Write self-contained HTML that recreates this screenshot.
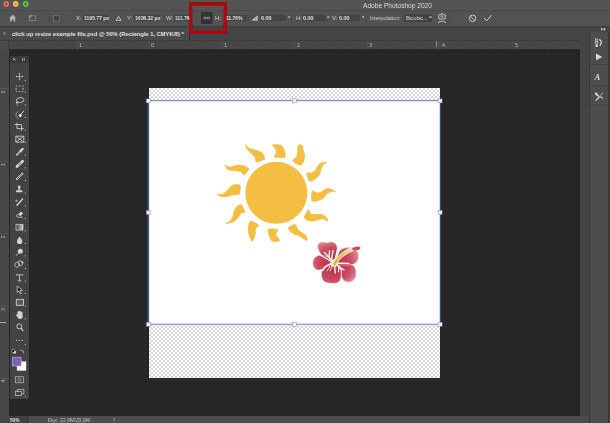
<!DOCTYPE html>
<html><head><meta charset="utf-8"><style>
*{margin:0;padding:0;box-sizing:border-box}
html,body{width:610px;height:423px;overflow:hidden;background:#272727;font-family:"Liberation Sans",sans-serif}
.a{position:absolute}
.t{position:absolute;white-space:nowrap;color:#d6d6d6;line-height:1;transform-origin:0 0;will-change:transform}
.field{position:absolute;top:15.2px;height:6px;background:#444444}
.ot{position:absolute;top:15.6px;font-size:6px;color:#e4e4e4;font-weight:bold;white-space:nowrap;line-height:1;transform-origin:0 0;will-change:transform}
svg{position:absolute;left:0;top:0;will-change:transform}
</style></head><body>
<div class="a" style="left:0;top:0;width:610px;height:9.5px;background:#545454"></div>
<div class="a" style="left:0;top:9.5px;width:610px;height:16.5px;background:#525252;border-top:0.5px solid #4a4a4a"></div>
<div class="a" style="left:0;top:26px;width:610px;height:14.3px;background:#444444;border-top:1.9px solid #3b3b3b"></div>
<div class="a" style="left:0;top:26px;width:189.5px;height:14.3px;background:#4a4a4a;border-top:1.9px solid #3b3b3b;border-right:1px solid #2e2e2e"></div>
<div class="a" style="left:9px;top:40.2px;width:571px;height:9.3px;background:#474747;border-top:0.8px solid #3f3f3f"></div>
<div class="a" style="left:0;top:40.2px;width:9px;height:383px;background:#474747"></div>
<div class="a" style="left:0;top:40.2px;width:9px;height:9.3px;background:#4b4b4b;border-top:0.8px solid #3f3f3f;border-right:0.6px solid #404040"></div>
<div class="a" style="left:9px;top:49.5px;width:1.2px;height:366px;background:#262626"></div>
<div class="a" style="left:576px;top:49.5px;width:3.5px;height:366px;background:#232323"></div>
<div class="a" style="left:579.5px;top:40.3px;width:10px;height:376px;background:#444444"></div>
<div class="a" style="left:589.5px;top:32.3px;width:19px;height:391px;background:#4d4d4d"></div>
<div class="a" style="left:588.6px;top:32.3px;width:0.9px;height:391px;background:#393939"></div>
<div class="a" style="left:608.4px;top:32.3px;width:0.8px;height:391px;background:#333333"></div>
<div class="a" style="left:609px;top:32.3px;width:1px;height:391px;background:#474747"></div>
<div class="a" style="left:9px;top:415.6px;width:579.6px;height:8px;background:#4c4c4c"></div>
<div class="a" style="left:9px;top:415.6px;width:19.5px;height:8px;background:#3f3f3f"></div>
<div class="a" style="left:10.2px;top:55.6px;width:18.6px;height:343.8px;background:#434343"></div>
<div class="a" style="left:10.2px;top:55.6px;width:18.6px;height:7.4px;background:#393939"></div>
<div class="a" style="left:28.8px;top:55.6px;width:1px;height:343.8px;background:#222222"></div>
<div class="a" style="left:149.3px;top:88px;width:290.4px;height:290px;background-color:#fff;background-image:linear-gradient(45deg,#d6d6d6 25%,transparent 25%,transparent 75%,#d6d6d6 75%),linear-gradient(45deg,#d6d6d6 25%,transparent 25%,transparent 75%,#d6d6d6 75%);background-size:4px 4px;background-position:0 0,2px 2px"></div>
<div class="a" style="left:149.3px;top:100.5px;width:290.4px;height:224px;background:#fff"></div>
<div class="a" style="left:404.3px;top:14.4px;width:28px;height:7.8px;background:#424242"></div>
<div class="field" style="left:83px;width:26px"></div>
<div class="field" style="left:134px;width:26px"></div>
<div class="field" style="left:174px;width:15px"></div>
<div class="field" style="left:225px;width:22px"></div>
<div class="field" style="left:260px;width:26px"></div>
<div class="field" style="left:302px;width:24px"></div>
<div class="field" style="left:338px;width:22px"></div>
<svg width="610" height="423" viewBox="0 0 610 423"><circle cx="6.3" cy="3.9" r="2.8" fill="#ee6a5f"/><circle cx="15.7" cy="3.9" r="2.8" fill="#f5c150"/><circle cx="25.7" cy="3.9" r="2.8" fill="#62c554"/><circle cx="6.3" cy="3.9" r="0.9" fill="#8c1a14"/><rect x="14.3" y="3.5" width="2.8" height="0.9" fill="#9a6a10"/><rect x="24.3" y="3.5" width="2.8" height="0.9" fill="#1e6e18"/><rect x="25.25" y="2.5" width="0.9" height="2.8" fill="#1e6e18"/><path d="M12.6,14.7 L16.2,18.1 L15.2,18.1 L15.2,21.5 L13.5,21.5 L13.5,19.5 L11.8,19.5 L11.8,21.5 L10.0,21.5 L10.0,18.1 L9,18.1 Z" fill="#b2b2b2"/><rect x="29.5" y="15.8" width="6.3" height="4.6" fill="none" stroke="#8e8e8e" stroke-width="0.7"/><path d="M29.2,15.5 L32,15.5 L29.2,18.5Z" fill="#a6a6a6"/><path d="M44,18 l1.2,1.2 l1.2,-1.2" fill="none" stroke="#666" stroke-width="0.5"/><rect x="48" y="12" width="0.6" height="11" fill="#4c4c4c"/><rect x="53.6" y="15.6" width="5.9" height="5.6" fill="#424242" stroke="#777777" stroke-width="0.8"/><rect x="63.3" y="15.8" width="7" height="5.4" fill="none" stroke="#5e5e5e" stroke-width="0.6" stroke-dasharray="1,1"/><path d="M118.6,16.3 L121,20.4 L116.2,20.4 Z" fill="none" stroke="#d0d0d0" stroke-width="0.85" stroke-linejoin="round"/><rect x="163.4" y="12" width="0.6" height="11" fill="#484848"/><path d="M251.6,20.4 L257.6,15.5 L257.6,20.4 Z" fill="#d0d0d0"/><path d="M254.6,19.2 L256.4,17.7 L256.4,19.2Z" fill="#505050"/><rect x="248" y="12" width="0.6" height="11" fill="#484848"/><rect x="291" y="12" width="0.6" height="11" fill="#484848"/><rect x="366" y="12" width="0.6" height="11" fill="#484848"/><path d="M438.5,15 L442,13.6 L445.5,15 L445,19 L439,19 Z" fill="none" stroke="#c8c8c8" stroke-width="0.9"/><path d="M440,16.2 h4 M442,14 v5" stroke="#c8c8c8" stroke-width="0.6"/><path d="M438,22.5 Q442,19.5 446,22.5" fill="none" stroke="#c8c8c8" stroke-width="0.9"/><rect x="449.4" y="12" width="0.6" height="11" fill="#484848"/><circle cx="472.6" cy="18.3" r="3.2" fill="none" stroke="#d0d0d0" stroke-width="0.95"/><path d="M470.4,16.1 L474.8,20.5" stroke="#d0d0d0" stroke-width="0.95"/><path d="M484.2,18.1 L486.6,20.9 L491.5,15.2" fill="none" stroke="#d8d8d8" stroke-width="0.95"/><rect x="190.75" y="3.95" width="34.5" height="28.1" fill="none" stroke="#aa0a0e" stroke-width="3.6"/><rect x="201" y="12" width="11.5" height="12" fill="#333333"/><path d="M203.8,17.2 h2.2 v1.6 h-2.2Z M207.5,17.2 h2.2 v1.6 h-2.2Z" fill="none" stroke="#bdbdbd" stroke-width="0.55"/><path d="M205.5,18 h2.5" stroke="#bdbdbd" stroke-width="0.55"/><rect x="3.2" y="32" width="2.8" height="2.8" rx="0.6" fill="#727272"/><rect x="22.43" y="46.5" width="0.6" height="3" fill="#525252"/><rect x="26.96" y="48" width="0.5" height="1.5" fill="#4f4f4f"/><rect x="31.49" y="48" width="0.5" height="1.5" fill="#4f4f4f"/><rect x="36.02" y="48" width="0.5" height="1.5" fill="#4f4f4f"/><rect x="40.55" y="46.5" width="0.6" height="3" fill="#525252"/><rect x="45.08" y="48" width="0.5" height="1.5" fill="#4f4f4f"/><rect x="49.61" y="48" width="0.5" height="1.5" fill="#4f4f4f"/><rect x="54.14" y="48" width="0.5" height="1.5" fill="#4f4f4f"/><rect x="58.68" y="46.5" width="0.6" height="3" fill="#525252"/><rect x="63.21" y="48" width="0.5" height="1.5" fill="#4f4f4f"/><rect x="67.74" y="48" width="0.5" height="1.5" fill="#4f4f4f"/><rect x="72.27" y="48" width="0.5" height="1.5" fill="#4f4f4f"/><rect x="76.80" y="41" width="0.7" height="8.5" fill="#585858"/><rect x="81.33" y="48" width="0.5" height="1.5" fill="#4f4f4f"/><rect x="85.86" y="48" width="0.5" height="1.5" fill="#4f4f4f"/><rect x="90.39" y="48" width="0.5" height="1.5" fill="#4f4f4f"/><rect x="94.93" y="46.5" width="0.6" height="3" fill="#525252"/><rect x="99.46" y="48" width="0.5" height="1.5" fill="#4f4f4f"/><rect x="103.99" y="48" width="0.5" height="1.5" fill="#4f4f4f"/><rect x="108.52" y="48" width="0.5" height="1.5" fill="#4f4f4f"/><rect x="113.05" y="46.5" width="0.6" height="3" fill="#525252"/><rect x="117.58" y="48" width="0.5" height="1.5" fill="#4f4f4f"/><rect x="122.11" y="48" width="0.5" height="1.5" fill="#4f4f4f"/><rect x="126.64" y="48" width="0.5" height="1.5" fill="#4f4f4f"/><rect x="131.18" y="46.5" width="0.6" height="3" fill="#525252"/><rect x="135.71" y="48" width="0.5" height="1.5" fill="#4f4f4f"/><rect x="140.24" y="48" width="0.5" height="1.5" fill="#4f4f4f"/><rect x="144.77" y="48" width="0.5" height="1.5" fill="#4f4f4f"/><rect x="149.30" y="41" width="0.7" height="8.5" fill="#585858"/><rect x="153.83" y="48" width="0.5" height="1.5" fill="#4f4f4f"/><rect x="158.36" y="48" width="0.5" height="1.5" fill="#4f4f4f"/><rect x="162.89" y="48" width="0.5" height="1.5" fill="#4f4f4f"/><rect x="167.43" y="46.5" width="0.6" height="3" fill="#525252"/><rect x="171.96" y="48" width="0.5" height="1.5" fill="#4f4f4f"/><rect x="176.49" y="48" width="0.5" height="1.5" fill="#4f4f4f"/><rect x="181.02" y="48" width="0.5" height="1.5" fill="#4f4f4f"/><rect x="185.55" y="46.5" width="0.6" height="3" fill="#525252"/><rect x="190.08" y="48" width="0.5" height="1.5" fill="#4f4f4f"/><rect x="194.61" y="48" width="0.5" height="1.5" fill="#4f4f4f"/><rect x="199.14" y="48" width="0.5" height="1.5" fill="#4f4f4f"/><rect x="203.68" y="46.5" width="0.6" height="3" fill="#525252"/><rect x="208.21" y="48" width="0.5" height="1.5" fill="#4f4f4f"/><rect x="212.74" y="48" width="0.5" height="1.5" fill="#4f4f4f"/><rect x="217.27" y="48" width="0.5" height="1.5" fill="#4f4f4f"/><rect x="221.80" y="41" width="0.7" height="8.5" fill="#585858"/><rect x="226.33" y="48" width="0.5" height="1.5" fill="#4f4f4f"/><rect x="230.86" y="48" width="0.5" height="1.5" fill="#4f4f4f"/><rect x="235.39" y="48" width="0.5" height="1.5" fill="#4f4f4f"/><rect x="239.93" y="46.5" width="0.6" height="3" fill="#525252"/><rect x="244.46" y="48" width="0.5" height="1.5" fill="#4f4f4f"/><rect x="248.99" y="48" width="0.5" height="1.5" fill="#4f4f4f"/><rect x="253.52" y="48" width="0.5" height="1.5" fill="#4f4f4f"/><rect x="258.05" y="46.5" width="0.6" height="3" fill="#525252"/><rect x="262.58" y="48" width="0.5" height="1.5" fill="#4f4f4f"/><rect x="267.11" y="48" width="0.5" height="1.5" fill="#4f4f4f"/><rect x="271.64" y="48" width="0.5" height="1.5" fill="#4f4f4f"/><rect x="276.18" y="46.5" width="0.6" height="3" fill="#525252"/><rect x="280.71" y="48" width="0.5" height="1.5" fill="#4f4f4f"/><rect x="285.24" y="48" width="0.5" height="1.5" fill="#4f4f4f"/><rect x="289.77" y="48" width="0.5" height="1.5" fill="#4f4f4f"/><rect x="294.30" y="41" width="0.7" height="8.5" fill="#585858"/><rect x="298.83" y="48" width="0.5" height="1.5" fill="#4f4f4f"/><rect x="303.36" y="48" width="0.5" height="1.5" fill="#4f4f4f"/><rect x="307.89" y="48" width="0.5" height="1.5" fill="#4f4f4f"/><rect x="312.43" y="46.5" width="0.6" height="3" fill="#525252"/><rect x="316.96" y="48" width="0.5" height="1.5" fill="#4f4f4f"/><rect x="321.49" y="48" width="0.5" height="1.5" fill="#4f4f4f"/><rect x="326.02" y="48" width="0.5" height="1.5" fill="#4f4f4f"/><rect x="330.55" y="46.5" width="0.6" height="3" fill="#525252"/><rect x="335.08" y="48" width="0.5" height="1.5" fill="#4f4f4f"/><rect x="339.61" y="48" width="0.5" height="1.5" fill="#4f4f4f"/><rect x="344.14" y="48" width="0.5" height="1.5" fill="#4f4f4f"/><rect x="348.68" y="46.5" width="0.6" height="3" fill="#525252"/><rect x="353.21" y="48" width="0.5" height="1.5" fill="#4f4f4f"/><rect x="357.74" y="48" width="0.5" height="1.5" fill="#4f4f4f"/><rect x="362.27" y="48" width="0.5" height="1.5" fill="#4f4f4f"/><rect x="366.80" y="41" width="0.7" height="8.5" fill="#585858"/><rect x="371.33" y="48" width="0.5" height="1.5" fill="#4f4f4f"/><rect x="375.86" y="48" width="0.5" height="1.5" fill="#4f4f4f"/><rect x="380.39" y="48" width="0.5" height="1.5" fill="#4f4f4f"/><rect x="384.93" y="46.5" width="0.6" height="3" fill="#525252"/><rect x="389.46" y="48" width="0.5" height="1.5" fill="#4f4f4f"/><rect x="393.99" y="48" width="0.5" height="1.5" fill="#4f4f4f"/><rect x="398.52" y="48" width="0.5" height="1.5" fill="#4f4f4f"/><rect x="403.05" y="46.5" width="0.6" height="3" fill="#525252"/><rect x="407.58" y="48" width="0.5" height="1.5" fill="#4f4f4f"/><rect x="412.11" y="48" width="0.5" height="1.5" fill="#4f4f4f"/><rect x="416.64" y="48" width="0.5" height="1.5" fill="#4f4f4f"/><rect x="421.18" y="46.5" width="0.6" height="3" fill="#525252"/><rect x="425.71" y="48" width="0.5" height="1.5" fill="#4f4f4f"/><rect x="430.24" y="48" width="0.5" height="1.5" fill="#4f4f4f"/><rect x="434.77" y="48" width="0.5" height="1.5" fill="#4f4f4f"/><rect x="439.30" y="41" width="0.7" height="8.5" fill="#585858"/><rect x="443.83" y="48" width="0.5" height="1.5" fill="#4f4f4f"/><rect x="448.36" y="48" width="0.5" height="1.5" fill="#4f4f4f"/><rect x="452.89" y="48" width="0.5" height="1.5" fill="#4f4f4f"/><rect x="457.43" y="46.5" width="0.6" height="3" fill="#525252"/><rect x="461.96" y="48" width="0.5" height="1.5" fill="#4f4f4f"/><rect x="466.49" y="48" width="0.5" height="1.5" fill="#4f4f4f"/><rect x="471.02" y="48" width="0.5" height="1.5" fill="#4f4f4f"/><rect x="475.55" y="46.5" width="0.6" height="3" fill="#525252"/><rect x="480.08" y="48" width="0.5" height="1.5" fill="#4f4f4f"/><rect x="484.61" y="48" width="0.5" height="1.5" fill="#4f4f4f"/><rect x="489.14" y="48" width="0.5" height="1.5" fill="#4f4f4f"/><rect x="493.68" y="46.5" width="0.6" height="3" fill="#525252"/><rect x="498.21" y="48" width="0.5" height="1.5" fill="#4f4f4f"/><rect x="502.74" y="48" width="0.5" height="1.5" fill="#4f4f4f"/><rect x="507.27" y="48" width="0.5" height="1.5" fill="#4f4f4f"/><rect x="511.80" y="41" width="0.7" height="8.5" fill="#585858"/><rect x="516.33" y="48" width="0.5" height="1.5" fill="#4f4f4f"/><rect x="520.86" y="48" width="0.5" height="1.5" fill="#4f4f4f"/><rect x="525.39" y="48" width="0.5" height="1.5" fill="#4f4f4f"/><rect x="529.92" y="46.5" width="0.6" height="3" fill="#525252"/><rect x="534.46" y="48" width="0.5" height="1.5" fill="#4f4f4f"/><rect x="538.99" y="48" width="0.5" height="1.5" fill="#4f4f4f"/><rect x="543.52" y="48" width="0.5" height="1.5" fill="#4f4f4f"/><rect x="548.05" y="46.5" width="0.6" height="3" fill="#525252"/><rect x="552.58" y="48" width="0.5" height="1.5" fill="#4f4f4f"/><rect x="557.11" y="48" width="0.5" height="1.5" fill="#4f4f4f"/><rect x="561.64" y="48" width="0.5" height="1.5" fill="#4f4f4f"/><rect x="566.17" y="46.5" width="0.6" height="3" fill="#525252"/><rect x="570.71" y="48" width="0.5" height="1.5" fill="#4f4f4f"/><rect x="575.24" y="48" width="0.5" height="1.5" fill="#4f4f4f"/><rect x="579.77" y="48" width="0.5" height="1.5" fill="#4f4f4f"/><rect x="6.5" y="52.05" width="2.5" height="0.6" fill="#545454"/><rect x="6.5" y="70.17" width="2.5" height="0.6" fill="#545454"/><rect x="0" y="88.30" width="9" height="0.7" fill="#5e5e5e"/><rect x="6.5" y="106.42" width="2.5" height="0.6" fill="#545454"/><rect x="6.5" y="124.55" width="2.5" height="0.6" fill="#545454"/><rect x="6.5" y="142.68" width="2.5" height="0.6" fill="#545454"/><rect x="0" y="160.80" width="9" height="0.7" fill="#5e5e5e"/><rect x="6.5" y="178.93" width="2.5" height="0.6" fill="#545454"/><rect x="6.5" y="197.05" width="2.5" height="0.6" fill="#545454"/><rect x="6.5" y="215.18" width="2.5" height="0.6" fill="#545454"/><rect x="0" y="233.30" width="9" height="0.7" fill="#5e5e5e"/><rect x="6.5" y="251.43" width="2.5" height="0.6" fill="#545454"/><rect x="6.5" y="269.55" width="2.5" height="0.6" fill="#545454"/><rect x="6.5" y="287.68" width="2.5" height="0.6" fill="#545454"/><rect x="0" y="305.80" width="9" height="0.7" fill="#5e5e5e"/><rect x="6.5" y="323.93" width="2.5" height="0.6" fill="#545454"/><rect x="6.5" y="342.05" width="2.5" height="0.6" fill="#545454"/><rect x="6.5" y="360.18" width="2.5" height="0.6" fill="#545454"/><rect x="0" y="378.30" width="9" height="0.7" fill="#5e5e5e"/><rect x="6.5" y="396.43" width="2.5" height="0.6" fill="#545454"/><rect x="6.5" y="414.55" width="2.5" height="0.6" fill="#545454"/><rect x="0" y="322" width="6" height="0.9" fill="#b4b4b4"/><rect x="436" y="40.8" width="0.8" height="6.6" fill="#9a9a9a"/><text x="0" y="0" transform="translate(4.7,93.2) rotate(-90)" font-family="Liberation Sans" font-size="5" fill="#bdbdbd">0</text><text x="0" y="0" transform="translate(4.7,165.7) rotate(-90)" font-family="Liberation Sans" font-size="5" fill="#bdbdbd">1</text><text x="0" y="0" transform="translate(4.7,238.2) rotate(-90)" font-family="Liberation Sans" font-size="5" fill="#bdbdbd">2</text><text x="0" y="0" transform="translate(4.7,310.7) rotate(-90)" font-family="Liberation Sans" font-size="5" fill="#bdbdbd">3</text><text x="0" y="0" transform="translate(4.7,382.5) rotate(-90)" font-family="Liberation Sans" font-size="5" fill="#bdbdbd">4</text><rect x="148.7" y="100.7" width="291.5" height="223.5" fill="none" stroke="#5a80c8" stroke-width="1.0"/><rect x="147.6" y="100.7" width="0.9" height="223.5" fill="#3a5588"/><rect x="440.5" y="100.7" width="0.8" height="223.5" fill="#26345a"/><rect x="146.40" y="98.90" width="4" height="4" fill="#eef3fc" stroke="#6f88bc" stroke-width="0.45"/><rect x="146.40" y="210.50" width="4" height="4" fill="#eef3fc" stroke="#6f88bc" stroke-width="0.45"/><rect x="146.40" y="322.30" width="4" height="4" fill="#eef3fc" stroke="#6f88bc" stroke-width="0.45"/><rect x="292.30" y="98.90" width="4" height="4" fill="#eef3fc" stroke="#6f88bc" stroke-width="0.45"/><rect x="292.30" y="322.30" width="4" height="4" fill="#eef3fc" stroke="#6f88bc" stroke-width="0.45"/><rect x="438.10" y="98.90" width="4" height="4" fill="#eef3fc" stroke="#6f88bc" stroke-width="0.45"/><rect x="438.10" y="210.50" width="4" height="4" fill="#eef3fc" stroke="#6f88bc" stroke-width="0.45"/><rect x="438.10" y="322.30" width="4" height="4" fill="#eef3fc" stroke="#6f88bc" stroke-width="0.45"/><circle cx="276.3" cy="192.8" r="31" fill="#f3be42"/><path d="M245.30,144.70 C245.38,144.44 247.62,147.36 248.50,147.90 C249.38,148.44 251.65,148.93 252.80,149.30 C253.96,149.67 257.25,150.60 258.40,151.10 C259.55,151.60 261.95,152.72 262.70,153.60 C263.45,154.47 264.59,157.94 264.80,158.60 C265.01,159.26 265.44,158.89 264.50,159.30 C263.56,159.71 257.82,162.36 256.70,162.10 C255.58,161.84 255.53,158.14 254.90,157.10 C254.27,156.06 252.13,154.02 251.30,153.20 C250.47,152.38 248.50,151.09 247.80,150.10 C247.10,149.11 245.22,144.96 245.30,144.70Z" fill="#f3be42" stroke="#f3be42" stroke-width="0.8" stroke-linejoin="round"/><path d="M272.50,145.10 C273.08,144.69 278.97,144.61 280.30,145.10 C281.63,145.59 283.36,148.36 283.90,149.30 C284.44,150.25 284.82,152.24 284.90,153.20 C284.98,154.16 285.80,157.04 284.60,157.50 C283.40,157.96 275.56,157.64 274.60,157.10 C273.64,156.56 276.32,153.89 276.40,152.90 C276.48,151.91 275.75,149.51 275.30,148.60 C274.85,147.69 271.92,145.51 272.50,145.10Z" fill="#f3be42" stroke="#f3be42" stroke-width="0.8" stroke-linejoin="round"/><path d="M298.40,145.30 C298.90,144.51 301.46,144.76 302.00,145.30 C302.54,145.84 302.67,148.70 303.00,149.90 C303.33,151.10 304.72,154.27 304.80,155.60 C304.88,156.93 304.24,160.18 303.70,161.30 C303.16,162.42 301.48,165.25 300.20,165.20 C298.92,165.15 293.12,161.86 292.70,160.90 C292.28,159.94 296.02,158.03 296.60,157.00 C297.18,155.97 297.49,153.47 297.70,152.10 C297.91,150.73 297.90,146.09 298.40,145.30Z" fill="#f3be42" stroke="#f3be42" stroke-width="0.8" stroke-linejoin="round"/><path d="M326.50,162.70 C326.42,162.41 322.86,162.41 321.90,162.70 C320.94,162.99 319.05,164.32 318.30,165.20 C317.55,166.07 316.33,169.29 315.50,170.20 C314.67,171.11 312.24,172.63 311.20,173.00 C310.16,173.37 306.76,172.44 306.60,173.40 C306.44,174.36 308.76,180.58 309.80,181.20 C310.84,181.82 314.35,179.49 315.50,178.70 C316.65,177.91 319.05,175.56 319.70,174.40 C320.35,173.25 320.76,169.87 321.10,168.80 C321.44,167.73 321.97,165.91 322.60,165.20 C323.23,164.49 326.58,162.99 326.50,162.70Z" fill="#f3be42" stroke="#f3be42" stroke-width="0.8" stroke-linejoin="round"/><path d="M312.30,191.10 C312.79,190.16 315.51,192.77 316.50,192.90 C317.49,193.03 319.81,192.62 320.80,192.20 C321.79,191.78 324.09,189.72 325.00,189.30 C325.91,188.88 327.77,188.55 328.60,188.60 C329.43,188.65 331.32,189.36 332.10,189.70 C332.88,190.04 335.46,191.25 335.30,191.50 C335.14,191.75 331.66,191.56 330.70,191.80 C329.74,192.05 327.93,192.89 327.10,193.60 C326.27,194.31 324.43,197.15 323.60,197.90 C322.77,198.65 321.32,199.64 320.00,200.00 C318.68,200.36 313.20,202.04 312.30,201.00 C311.40,199.96 311.81,192.04 312.30,191.10Z" fill="#f3be42" stroke="#f3be42" stroke-width="0.8" stroke-linejoin="round"/><path d="M308.50,209.80 C309.24,209.43 309.94,213.16 310.60,213.70 C311.27,214.24 313.29,214.35 314.20,214.40 C315.11,214.45 317.41,214.05 318.40,214.10 C319.39,214.15 321.79,214.44 322.70,214.80 C323.61,215.16 325.62,216.47 326.20,217.20 C326.78,217.93 327.94,220.89 327.70,221.10 C327.45,221.31 324.93,219.25 324.10,219.00 C323.27,218.75 321.51,218.84 320.60,219.00 C319.69,219.16 317.29,220.16 316.30,220.40 C315.31,220.65 313.17,221.13 312.10,221.10 C311.03,221.06 308.01,220.59 307.10,220.10 C306.19,219.61 304.14,218.10 304.30,216.90 C304.46,215.70 307.76,210.17 308.50,209.80Z" fill="#f3be42" stroke="#f3be42" stroke-width="0.8" stroke-linejoin="round"/><path d="M288.40,227.60 C288.94,226.77 294.03,224.20 295.10,224.40 C296.17,224.60 296.90,228.39 297.60,229.30 C298.30,230.21 300.19,231.53 301.10,232.20 C302.01,232.86 304.69,234.25 305.40,235.00 C306.11,235.75 307.04,237.94 307.20,238.60 C307.36,239.26 307.25,240.70 306.80,240.70 C306.35,240.70 304.21,239.18 303.30,238.60 C302.39,238.02 300.07,236.24 299.00,235.70 C297.93,235.16 295.09,234.49 294.10,234.00 C293.11,233.51 291.17,232.25 290.50,231.50 C289.83,230.75 287.86,228.43 288.40,227.60Z" fill="#f3be42" stroke="#f3be42" stroke-width="0.8" stroke-linejoin="round"/><path d="M268.30,229.30 C269.30,228.60 277.04,229.12 277.90,229.70 C278.76,230.28 275.50,233.02 275.70,234.30 C275.90,235.58 280.01,239.92 279.60,240.70 C279.19,241.48 273.40,241.58 272.20,241.00 C271.00,240.42 269.75,237.06 269.30,235.70 C268.85,234.33 267.30,230.00 268.30,229.30Z" fill="#f3be42" stroke="#f3be42" stroke-width="0.8" stroke-linejoin="round"/><path d="M250.80,221.20 C251.97,221.15 258.03,224.27 258.60,225.10 C259.17,225.93 256.12,227.10 255.70,228.30 C255.28,229.50 255.41,233.91 255.00,235.40 C254.59,236.89 252.95,241.34 252.20,241.10 C251.45,240.85 249.02,235.12 248.60,233.30 C248.18,231.48 248.34,226.91 248.60,225.50 C248.86,224.09 249.63,221.25 250.80,221.20Z" fill="#f3be42" stroke="#f3be42" stroke-width="0.8" stroke-linejoin="round"/><path d="M241.30,204.70 C242.13,205.45 244.80,211.24 244.80,212.20 C244.80,213.16 242.05,212.33 241.30,212.90 C240.55,213.47 239.23,216.11 238.40,217.10 C237.57,218.09 235.65,220.65 234.20,221.40 C232.75,222.15 226.42,223.58 226.00,223.50 C225.58,223.42 229.77,221.61 230.60,220.70 C231.43,219.79 232.60,217.03 233.10,215.70 C233.60,214.37 234.36,210.46 234.90,209.30 C235.44,208.15 236.95,206.34 237.70,205.80 C238.45,205.26 240.47,203.95 241.30,204.70Z" fill="#f3be42" stroke="#f3be42" stroke-width="0.8" stroke-linejoin="round"/><path d="M240.20,185.70 C239.75,184.58 236.37,184.52 235.30,184.60 C234.23,184.68 231.99,185.65 231.00,186.40 C230.01,187.15 227.79,190.09 226.80,191.00 C225.81,191.91 223.59,193.78 222.50,194.20 C221.41,194.62 217.58,194.31 217.50,194.60 C217.42,194.89 220.80,196.45 221.80,196.70 C222.80,196.94 225.03,196.86 226.10,196.70 C227.17,196.54 229.93,195.55 231.00,195.30 C232.07,195.06 234.34,194.73 235.30,194.60 C236.26,194.47 238.63,195.24 239.20,194.20 C239.77,193.16 240.65,186.82 240.20,185.70Z" fill="#f3be42" stroke="#f3be42" stroke-width="0.8" stroke-linejoin="round"/><path d="M225.00,165.20 C225.16,164.91 228.13,166.92 229.20,167.00 C230.27,167.08 233.13,166.15 234.20,165.90 C235.27,165.66 237.33,164.94 238.40,164.90 C239.47,164.87 242.23,165.19 243.40,165.60 C244.57,166.01 247.78,167.94 248.40,168.40 C249.02,168.86 249.20,168.72 248.70,169.50 C248.20,170.28 244.88,174.77 244.10,175.10 C243.32,175.43 242.75,172.79 242.00,172.30 C241.25,171.81 238.85,171.11 237.70,170.90 C236.54,170.69 233.25,170.66 232.10,170.50 C230.94,170.34 228.63,170.12 227.80,169.50 C226.97,168.88 224.84,165.49 225.00,165.20Z" fill="#f3be42" stroke="#f3be42" stroke-width="0.8" stroke-linejoin="round"/><defs><radialGradient id="pg" cx="334" cy="264" r="24" gradientUnits="userSpaceOnUse"><stop offset="0" stop-color="#d46676"/><stop offset="0.3" stop-color="#bc364e"/><stop offset="0.7" stop-color="#c84c60"/><stop offset="1" stop-color="#de7c8c"/></radialGradient><linearGradient id="stg" x1="335" y1="265" x2="354" y2="249" gradientUnits="userSpaceOnUse"><stop offset="0" stop-color="#e0b030"/><stop offset="0.6" stop-color="#ecc868"/><stop offset="1" stop-color="#f6e2b8"/></linearGradient></defs><path d="M334.00,264.00 C331.92,264.58 326.58,259.83 324.00,257.50 C321.42,255.17 319.50,252.17 318.50,250.00 C317.50,247.83 317.42,245.83 318.00,244.50 C318.58,243.17 320.42,242.28 322.00,242.00 C323.58,241.72 326.00,242.83 327.50,242.80 C329.00,242.77 329.67,241.68 331.00,241.80 C332.33,241.92 334.45,242.47 335.50,243.50 C336.55,244.53 337.13,246.25 337.30,248.00 C337.47,249.75 337.05,251.33 336.50,254.00 C335.95,256.67 336.08,263.42 334.00,264.00Z" fill="url(#pg)" stroke="#fbeaea" stroke-width="0.55"/><path d="M334.00,264.00 C333.17,265.75 326.67,267.50 324.00,268.50 C321.33,269.50 319.73,270.25 318.00,270.00 C316.27,269.75 314.43,268.50 313.60,267.00 C312.77,265.50 312.60,262.75 313.00,261.00 C313.40,259.25 314.50,257.45 316.00,256.50 C317.50,255.55 319.83,255.05 322.00,255.30 C324.17,255.55 327.00,256.55 329.00,258.00 C331.00,259.45 334.83,262.25 334.00,264.00Z" fill="url(#pg)" stroke="#fbeaea" stroke-width="0.55"/><path d="M334.00,264.00 C336.05,264.67 339.13,266.83 340.30,269.00 C341.47,271.17 341.38,274.75 341.00,277.00 C340.62,279.25 339.83,281.47 338.00,282.50 C336.17,283.53 332.42,283.45 330.00,283.20 C327.58,282.95 324.95,282.53 323.50,281.00 C322.05,279.47 321.30,276.25 321.30,274.00 C321.30,271.75 322.38,269.00 323.50,267.50 C324.62,266.00 326.25,265.58 328.00,265.00 C329.75,264.42 331.95,263.33 334.00,264.00Z" fill="url(#pg)" stroke="#fbeaea" stroke-width="0.55"/><path d="M334.00,264.00 C333.17,264.67 339.75,266.00 341.00,268.00 C342.25,270.00 340.92,273.83 341.50,276.00 C342.08,278.17 342.92,280.03 344.50,281.00 C346.08,281.97 349.15,282.47 351.00,281.80 C352.85,281.13 354.80,278.97 355.60,277.00 C356.40,275.03 356.23,271.92 355.80,270.00 C355.37,268.08 354.63,266.50 353.00,265.50 C351.37,264.50 349.17,264.25 346.00,264.00 C342.83,263.75 334.83,263.33 334.00,264.00Z" fill="url(#pg)" stroke="#fbeaea" stroke-width="0.55"/><path d="M334.00,264.00 C332.25,262.50 336.42,258.33 337.50,256.00 C338.58,253.67 338.92,251.40 340.50,250.00 C342.08,248.60 344.83,247.85 347.00,247.60 C349.17,247.35 351.67,247.60 353.50,248.50 C355.33,249.40 357.22,251.25 358.00,253.00 C358.78,254.75 358.70,257.25 358.20,259.00 C357.70,260.75 356.70,262.50 355.00,263.50 C353.30,264.50 351.50,264.92 348.00,265.00 C344.50,265.08 335.75,265.50 334.00,264.00Z" fill="url(#pg)" stroke="#fbeaea" stroke-width="0.55"/><g stroke="#fff6f0" stroke-linecap="round" fill="none"><path d="M334.2,263 L324.5,252.5 M329,257.5 L329.5,251 M331.5,260 L333,250.5" stroke-width="1.35"/><path d="M334.2,263 L321,255.5 M334.2,263 Q325,265 322.8,270.5 M334.2,263 Q335,268 335.2,273" stroke-width="1.4"/><path d="M334.2,263 L344,270 M339,266.5 L338.5,271.5 M334.2,263 L349,263.3 M334.2,263 L337.7,249" stroke-width="1.35"/><path d="M330,266 L327,271 M332,266 L330,271" stroke-width="0.8"/></g><circle cx="334.2" cy="263" r="3.8" fill="#fff3e6"/><path d="M334.5,264 Q341,253 353,249" fill="none" stroke="#fbf0dc" stroke-width="4" stroke-linecap="round"/><path d="M334.5,264 Q341,253 353,249" fill="none" stroke="url(#stg)" stroke-width="2.7" stroke-linecap="round"/><ellipse cx="356.3" cy="248.5" rx="4.2" ry="1.9" transform="rotate(-10 356.3 248.5)" fill="#d24a5a"/><path d="M13.1,58.2 L15.4,60.5 M15.4,58.2 L13.1,60.5" stroke="#cccccc" stroke-width="0.75"/><path d="M22.6,57.9 v3 M24.3,57.9 v3" stroke="#b4b4b4" stroke-width="0.75"/><path d="M19.5,73.4 V79.8 M16.2,76.6 H22.8" stroke="#d4d4d4" stroke-width="0.6"/><path d="M19.5,72.9 l-1,1.1 h2Z M19.5,80.3 l-1,-1.1 h2Z M15.8,76.6 l1.1,-1 v2Z M23.2,76.6 l-1.1,-1 v2Z" fill="#d4d4d4"/><path d="M15.8,86 h1.3 M18.9,86 h1.4 M22.1,86 h1.3 M15.8,91.6 h1.3 M18.9,91.6 h1.4 M22.1,91.6 h1.3 M16.1,87.9 v1.8 M23.1,87.9 v1.8" stroke="#d4d4d4" stroke-width="0.8"/><ellipse cx="20.2" cy="100.1" rx="3.7" ry="2.5" transform="rotate(-6 20.2 100.1)" fill="none" stroke="#d4d4d4" stroke-width="0.8"/><circle cx="16.9" cy="102.4" r="0.9" fill="#d4d4d4"/><path d="M16.9,102.8 Q16.8,104.6 17.6,105.8" fill="none" stroke="#d4d4d4" stroke-width="0.6"/><path d="M20.8,114.6 L23.5,111.2" stroke="#d4d4d4" stroke-width="1" stroke-linecap="round"/><circle cx="20.2" cy="115.4" r="1.5" fill="#e8e8e8"/><path d="M18.6,111.4 Q15.4,112.6 15.9,115.8 Q16.4,118.2 18.8,119" fill="none" stroke="#a8a8a8" stroke-width="0.7"/><path d="M17,122.5 V128.6 H23.8 M14.5,124.6 H21.6 V130.8" fill="none" stroke="#d4d4d4" stroke-width="0.85"/><path d="M15.8,136.2 H23.8 V142.2 H15.8Z M15.8,136.2 L23.8,142.2 M23.8,136.2 L15.8,142.2" fill="none" stroke="#d4d4d4" stroke-width="0.8"/><path d="M16.8,154.8 L20.8,150.8" stroke="#d4d4d4" stroke-width="1.7" stroke-linecap="round"/><path d="M17.2,154.4 L20.4,151.2" stroke="#434343" stroke-width="0.6"/><path d="M20.6,151 L22.8,148.8" stroke="#d4d4d4" stroke-width="2.2" stroke-linecap="round"/><path d="M19.6,149.8 L22,152.2" stroke="#d4d4d4" stroke-width="0.9"/><path d="M17,166.5 L22.6,161.2" stroke="#d4d4d4" stroke-width="2.8" stroke-linecap="round"/><path d="M18.6,165 L21,162.7" stroke="#9a9a9a" stroke-width="2"/><path d="M16.8,179.2 L22.5,173.6" stroke="#d4d4d4" stroke-width="1.8" stroke-linecap="round"/><path d="M17.3,178.7 L22,174.1" stroke="#434343" stroke-width="0.7"/><circle cx="19.2" cy="187" r="1.5" fill="#d4d4d4"/><rect x="18.5" y="187.5" width="1.4" height="3" fill="#d4d4d4"/><rect x="16" y="190.2" width="6.4" height="2" rx="0.6" fill="#d4d4d4"/><path d="M17,205.2 L22.6,199" stroke="#d4d4d4" stroke-width="1.3" stroke-linecap="round"/><circle cx="16.4" cy="200.8" r="1" fill="#bdbdbd"/><path d="M18.2,214.5 L21,211.6 L23,213.4 L20.2,216.3Z" fill="#d4d4d4"/><path d="M17.8,213.8 Q15.5,216.4 17.3,217.2 H22.8" fill="none" stroke="#d4d4d4" stroke-width="0.75"/><defs><linearGradient id="gg"><stop offset="0" stop-color="#3a3a3a"/><stop offset="1" stop-color="#d0d0d0"/></linearGradient></defs><rect x="16" y="224.3" width="7" height="5.8" fill="url(#gg)" stroke="#d4d4d4" stroke-width="0.7"/><path d="M19.6,236.4 Q22.4,240 22.3,241.4 A2.7,2.7 0 0 1 16.9,241.4 Q16.9,240 19.6,236.4Z" fill="#d4d4d4"/><circle cx="20.3" cy="251.2" r="2.5" fill="#d4d4d4"/><path d="M18.6,253 L16.4,255.4" stroke="#d4d4d4" stroke-width="0.9" stroke-linecap="round"/><path d="M15,264.5 a2.2,2 0 1 0 4.2,0.6 a2.2,2 0 1 0 -4.2,-0.6Z M18.5,263.5 a2,1.8 0 1 1 3.6,-0.8 a2,1.8 0 1 1 -3.6,0.8" fill="none" stroke="#d4d4d4" stroke-width="0.8"/><path d="M21,261.5 L23.5,263" stroke="#d4d4d4" stroke-width="1.2"/><path d="M16.3,274.3 V275.5 M16.3,274.8 H22.7 M22.7,274.3 V275.5 M19.5,274.8 V280.8 M17.7,280.8 H21.3" fill="none" stroke="#d4d4d4" stroke-width="0.8"/><path d="M17.2,286 L17.2,292.6 L18.9,291 L20.6,294 L21.5,293.5 L20,290.5 L22.4,290.3Z" fill="#1e1e1e" stroke="#d4d4d4" stroke-width="0.75" stroke-linejoin="round"/><rect x="16.3" y="299.3" width="7.2" height="6" fill="#5c5c5c" stroke="#d4d4d4" stroke-width="0.85"/><path d="M17.5,312 Q18,311 19,311.3 Q20,310.8 20.8,311.5 Q21.8,311.2 22.3,312.2 L22.8,316.5 Q22.5,319 20,319 Q18,319 17,316.5 L15.8,314.8 Q16.3,314 17.3,314.8Z" fill="#d4d4d4"/><circle cx="19.3" cy="326.3" r="2.5" fill="none" stroke="#d4d4d4" stroke-width="0.85"/><path d="M21.1,328.2 L23,330.6" stroke="#d4d4d4" stroke-width="1.1" stroke-linecap="round"/><circle cx="16.4" cy="340.4" r="0.55" fill="#d4d4d4"/><circle cx="19.3" cy="340.4" r="0.55" fill="#d4d4d4"/><circle cx="22.2" cy="340.4" r="0.55" fill="#d4d4d4"/><path d="M24.2,81.0 l1.8,0 l0,-1.4 Z" fill="#b4b4b4"/><path d="M24.2,92.8 l1.8,0 l0,-1.4 Z" fill="#b4b4b4"/><path d="M24.2,105.4 l1.8,0 l0,-1.4 Z" fill="#b4b4b4"/><path d="M24.2,118.0 l1.8,0 l0,-1.4 Z" fill="#b4b4b4"/><path d="M24.2,130.4 l1.8,0 l0,-1.4 Z" fill="#b4b4b4"/><path d="M24.2,143.0 l1.8,0 l0,-1.4 Z" fill="#b4b4b4"/><path d="M24.2,155.5 l1.8,0 l0,-1.4 Z" fill="#b4b4b4"/><path d="M24.2,168.2 l1.8,0 l0,-1.4 Z" fill="#b4b4b4"/><path d="M24.2,181.0 l1.8,0 l0,-1.4 Z" fill="#b4b4b4"/><path d="M24.2,193.6 l1.8,0 l0,-1.4 Z" fill="#b4b4b4"/><path d="M24.2,206.2 l1.8,0 l0,-1.4 Z" fill="#b4b4b4"/><path d="M24.2,218.8 l1.8,0 l0,-1.4 Z" fill="#b4b4b4"/><path d="M24.2,231.2 l1.8,0 l0,-1.4 Z" fill="#b4b4b4"/><path d="M24.2,243.8 l1.8,0 l0,-1.4 Z" fill="#b4b4b4"/><path d="M24.2,256.3 l1.8,0 l0,-1.4 Z" fill="#b4b4b4"/><path d="M24.2,268.9 l1.8,0 l0,-1.4 Z" fill="#b4b4b4"/><path d="M24.2,281.5 l1.8,0 l0,-1.4 Z" fill="#b4b4b4"/><path d="M24.2,294.1 l1.8,0 l0,-1.4 Z" fill="#b4b4b4"/><path d="M24.2,306.6 l1.8,0 l0,-1.4 Z" fill="#b4b4b4"/><path d="M24.2,319.2 l1.8,0 l0,-1.4 Z" fill="#b4b4b4"/><path d="M24.2,345.0 l1.8,0 l0,-1.4 Z" fill="#b4b4b4"/><rect x="13.3" y="351" width="2.5" height="2.5" fill="#f0f0f0"/><rect x="12" y="349.8" width="2.5" height="2.5" fill="#111" stroke="#ddd" stroke-width="0.4"/><path d="M21.4,350.2 Q23.6,350 23.6,352.6" fill="none" stroke="#c8c8c8" stroke-width="0.7"/><path d="M21,349.5 v1.4 l-1,-0.7Z M22.9,352.4 h1.4 l-0.7,1Z" fill="#c8c8c8"/><rect x="17" y="361.6" width="9" height="9" fill="#ffffff" stroke="#cfcfcf" stroke-width="0.4"/><rect x="12.3" y="357.2" width="8.8" height="8.8" fill="#7462b6" stroke="#c4bce0" stroke-width="0.6"/><rect x="15.3" y="376.8" width="8" height="6" fill="none" stroke="#c8c8c8" stroke-width="0.7"/><circle cx="19.3" cy="379.8" r="1.5" fill="none" stroke="#c8c8c8" stroke-width="0.6"/><rect x="17.3" y="389.5" width="6.6" height="4.4" fill="none" stroke="#c8c8c8" stroke-width="0.7"/><rect x="15.3" y="391.4" width="6" height="4" fill="#434343" stroke="#c8c8c8" stroke-width="0.7"/><path d="M24.2,396.6 l1.8,0 l0,-1.4 Z" fill="#b4b4b4"/><path d="M601.4,28 l1.6,1.2 l-1.6,1.2Z M605,28 l-1.6,1.2 l1.6,1.2Z" fill="#d8d8d8" stroke="#d8d8d8" stroke-width="0.4"/><path d="M592,35 h14" stroke="#555" stroke-width="0.5" stroke-dasharray="0.6,0.6"/><rect x="595.6" y="39" width="2.2" height="2.2" fill="none" stroke="#d4d4d4" stroke-width="0.7"/><rect x="595.6" y="41.9" width="2.2" height="2.2" fill="none" stroke="#d4d4d4" stroke-width="0.7"/><circle cx="596.7" cy="45.9" r="1.2" fill="#e8e8e8"/><path d="M599.3,39.5 Q601.8,40.5 601.2,43.2 Q600.9,44.8 599.8,45.8" fill="none" stroke="#e4e4e4" stroke-width="1.1"/><path d="M596,53.6 L602.3,56.9 L596,60.2Z" fill="#d8d8d8"/><rect x="589.5" y="64.3" width="19" height="0.8" fill="#3a3a3a"/><rect x="589.5" y="85.6" width="19" height="0.8" fill="#3a3a3a"/><rect x="589.5" y="104.8" width="19" height="0.8" fill="#3a3a3a"/><text x="594.6" y="80.3" font-family="Liberation Serif" font-style="italic" font-weight="bold" font-size="8.6" fill="#dadada">A</text><path d="M595.2,92.6 Q594.6,95.2 596.8,95.6 L599,97.2 L599.6,96.4 L597.8,94.6 Q597.6,92.4 595.2,92.6Z" fill="#dcdcdc"/><path d="M602.8,93.2 L599.4,96.2" stroke="#c8c8c8" stroke-width="0.8" stroke-linecap="round"/><path d="M598.8,96.4 L595.2,100.2 Q595.8,101 596.6,100.4 L600,97.2Z" fill="#d4d4d4"/><path d="M599.6,97 Q601.6,98.6 603.2,98.8 Q603.4,98 601.6,96.8 L600.2,96.2Z" fill="#cfcfcf"/></svg>
<div class="t" style="left:362.60px;top:2.60px;font-size:6.60px;color:#dadada;">Adobe Photoshop 2020</div>
<div class="ot" style="left:84.00px;top:14.90px;font-size:6.00px;transform:scaleX(0.840);">1195.77 px</div>
<div class="ot" style="left:135.00px;top:14.90px;font-size:6.00px;transform:scaleX(0.840);">1036.32 px</div>
<div class="ot" style="left:174.60px;top:14.90px;font-size:6.00px;transform:scaleX(0.820);">111.76</div>
<div class="ot" style="left:226.00px;top:14.90px;font-size:6.00px;transform:scaleX(0.820);">11.76%</div>
<div class="ot" style="left:261.00px;top:14.90px;font-size:6.00px;transform:scaleX(0.900);">0.00</div>
<div class="ot" style="left:287.60px;top:14.90px;font-size:6.00px;">°</div>
<div class="ot" style="left:303.00px;top:14.90px;font-size:6.00px;transform:scaleX(0.900);">0.00</div>
<div class="ot" style="left:327.00px;top:14.90px;font-size:6.00px;">°</div>
<div class="ot" style="left:339.00px;top:14.90px;font-size:6.00px;transform:scaleX(0.900);">0.00</div>
<div class="ot" style="left:362.00px;top:14.90px;font-size:6.00px;">°</div>
<div class="ot" style="left:76.2px;top:14.9px;font-weight:normal;color:#cdcdcd;transform:scaleX(1.00)">X:</div>
<div class="ot" style="left:126.8px;top:14.9px;font-weight:normal;color:#cdcdcd;transform:scaleX(1.00)">Y:</div>
<div class="ot" style="left:166.0px;top:14.9px;font-weight:normal;color:#cdcdcd;transform:scaleX(0.95)">W:</div>
<div class="ot" style="left:215.0px;top:14.9px;font-weight:normal;color:#cdcdcd;transform:scaleX(1.00)">H:</div>
<div class="ot" style="left:296.0px;top:14.9px;font-weight:normal;color:#cdcdcd;transform:scaleX(1.00)">H:</div>
<div class="ot" style="left:332.0px;top:14.9px;font-weight:normal;color:#cdcdcd;transform:scaleX(1.00)">V:</div>
<div class="ot" style="left:427.60px;top:14.20px;font-size:5.50px;">&#8964;</div>
<div class="ot" style="left:406px;top:14.9px;font-size:6px;font-weight:normal;color:#dedede;transform:scaleX(0.89)">Bicubic...</div>
<div class="ot" style="left:369.6px;top:14.9px;font-size:6px;font-weight:normal;color:#d0d0d0;transform:scaleX(0.88)">Interpolation:</div>
<div class="t" style="left:11.50px;top:30.60px;font-size:6.00px;transform:scaleX(0.956);color:#e6e6e6;font-weight:bold;">click up resize example file.psd @ 50% (Rectangle 1, CMYK/8) *</div>
<div class="t" style="left:79.20px;top:43.20px;font-size:5.50px;color:#b4b4b4;">1</div>
<div class="t" style="left:151.00px;top:43.20px;font-size:5.50px;color:#b4b4b4;">0</div>
<div class="t" style="left:223.80px;top:43.20px;font-size:5.50px;color:#b4b4b4;">1</div>
<div class="t" style="left:296.60px;top:43.20px;font-size:5.50px;color:#b4b4b4;">2</div>
<div class="t" style="left:369.40px;top:43.20px;font-size:5.50px;color:#b4b4b4;">3</div>
<div class="t" style="left:442.20px;top:43.20px;font-size:5.50px;color:#b4b4b4;">4</div>
<div class="t" style="left:515.00px;top:43.20px;font-size:5.50px;color:#b4b4b4;">5</div>
<div class="t" style="left:9.60px;top:417.50px;font-size:5.80px;transform:scaleX(0.800);color:#e0e0e0;font-weight:bold;">50%</div>
<div class="t" style="left:48.20px;top:417.60px;font-size:5.60px;transform:scaleX(0.920);color:#cacaca;">Doc: 22.0M/25.0M</div>
<div class="t" style="left:112.50px;top:416.80px;font-size:6.50px;color:#c0c0c0;">&#8250;</div>
</body></html>
